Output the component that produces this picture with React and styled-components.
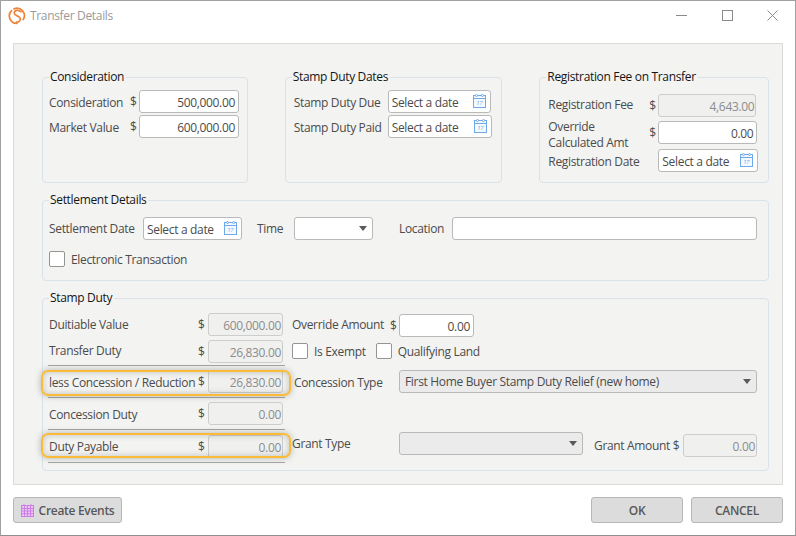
import React from "react";
import styled, { createGlobalStyle } from "styled-components";

const Global = createGlobalStyle`
  html, body { margin: 0; padding: 0; background: #fff; }
  body { font-family: "Open Sans", "Noto Sans", sans-serif; font-size: 12px; letter-spacing: -0.33px; color: #4b4b4b; }
  * { box-sizing: border-box; }
`;

const Window = styled.div`
  width: 796px; height: 536px; background: #fff;
  border: 1px solid #a0a0a0; border-bottom-color: #8f8f8f;
  display: flex; flex-direction: column; overflow: hidden;
`;
const TitleBar = styled.header`
  height: 42px; flex: none; display: flex; align-items: flex-start; padding: 6px 0 0 7px;
`;
const Title = styled.span`
  margin: 1px 0 0 4px; color: #9a9a9a; line-height: 16px;
`;
const WinControls = styled.div`
  margin-left: auto; display: flex; align-items: center; height: 16px; padding: 1px 17px 0 0; gap: 34.5px;
`;
const Panel = styled.main`
  flex: none; height: 442px; margin: 0 12px; background: #f3f3f2; border: 1px solid #dadada;
  padding: 25px 13px 13px 28px; display: flex; flex-direction: column; gap: 9px;
`;
const TopRow = styled.div`
  display: flex; gap: 37px;
`;
const Group = styled.fieldset`
  margin: 0; min-width: 0; border: 1px solid #d9e2ea; border-radius: 4px;
  width: ${p => p.$w}; height: ${p => p.$h}px;
  padding: ${p => p.$pt}px 6px 0 6px;
`;
const Legend = styled.legend`
  margin-left: 0; padding: 0 2px 0 1px; color: #151515; line-height: 16px;
`;
const Row = styled.div`
  display: flex; align-items: center; height: ${p => p.$h || 25}px; margin-top: ${p => p.$mt || 0}px;
  padding-left: ${p => p.$pl || 0}px; white-space: nowrap;
`;
const Label = styled.label`
  flex: none; width: ${p => (p.$w ? p.$w + "px" : "auto")}; margin-left: ${p => p.$ml || 0}px;
  position: relative; top: ${p => (p.$dy === undefined ? 1 : p.$dy)}px; line-height: 16px; white-space: nowrap;
`;
const Dollar = styled.span`
  flex: none; width: ${p => p.$w || 9}px;
`;
const Field = styled.div`
  flex: none; width: ${p => p.$w}px; height: 23px; margin-left: ${p => p.$ml || 0}px;
  position: relative; top: ${p => p.$dy || 0}px;
  background: ${p => (p.$off ? "#f0f0ef" : "#fff")};
  border: 1px solid ${p => (p.$off ? "#cdcdcd" : "#b9b9b9")}; border-radius: 3px;
  color: ${p => (p.$off ? "#8c8c8c" : "#4b4b4b")};
  display: flex; align-items: center; justify-content: flex-end;
  padding: 3px ${p => (p.$off ? 1 : 3)}px 0 3px; line-height: 16px;
`;
const DateBox = styled.div`
  flex: none; width: ${p => p.$w}px; height: 23px; background: #fff; border: 1px solid #b9b9b9; border-radius: 3px;
  display: flex; align-items: center; justify-content: space-between; padding: 3px 3px 0 3px;
  color: #4b4b4b; line-height: 16px;
`;
const CalWrap = styled.span`
  display: flex; position: relative; top: -2px;
`;
const Drop = styled.div`
  flex: none; width: ${p => p.$w}px; height: 23px; margin-left: ${p => p.$ml || 0}px;
  background: ${p => (p.$grey ? "#ebebeb" : "#fff")}; border: 1px solid #b9b9b9; border-radius: 3px;
  display: flex; align-items: center; padding: 0 5px 0 5px;
  &::after { content: ""; margin-left: auto; border: 4.5px solid transparent; border-top: 5px solid #5a5a5a; border-bottom: 0; }
`;
const Box = styled.span`
  flex: none; width: 16px; height: 16px; background: #fff; border: 1px solid #949494; border-radius: 2px;
  margin-right: 6px; margin-left: ${p => p.$ml || 0}px;
`;
const CheckText = styled.span`
  position: relative; top: 0;
`;
const DutyBody = styled.div`
  display: flex; gap: 7px;
`;
const LeftCol = styled.div`
  flex: none; width: 237px; margin-left: -1px;
`;
const RightCol = styled.div`
  flex: 1; min-width: 0; display: flex; flex-direction: column;
`;
const DutyRow = styled.div`
  position: relative; display: flex; align-items: center; height: ${p => p.$h}px;
  padding: 0 2px 0 1px; border-bottom: ${p => (p.$line ? "1px solid #a5a5a5" : "0")};
`;
const Highlight = styled.span`
  position: absolute; left: -7px; right: -6px; top: ${p => p.$top}px; height: ${p => p.$h}px;
  border: 2px solid #fbbb36; border-radius: 7px; pointer-events: none;
  box-shadow: 0 0 6px rgba(60,60,60,.35), inset 0 0 6px rgba(60,60,60,.28);
`;
const Footer = styled.footer`
  flex: 1; display: flex; align-items: flex-start; gap: 8px; padding: 12px 12px 0;
`;
const Btn = styled.button`
  height: 26px; width: ${p => p.$w}px; margin-right: ${p => p.$mr || 0}; background: #dcdcdc; border: 1px solid #b7b7b7; border-radius: 3px;
  font: 600 12px "Open Sans", sans-serif; letter-spacing: -0.3px; color: #585858; padding: 0;
  display: flex; align-items: center; justify-content: center; gap: 5px;
`;

const Cal = () => (
  <svg width="16" height="16" viewBox="0 0 16 16" fill="none" stroke="#6fa9ea">
    <rect x="2.500" y="2.500" width="12" height="12" fill="#f4f9ff" />
    <path d="M3 5.500h11" />
    <circle cx="5.500" cy="2.500" r="1" fill="#fff" /><circle cx="11.500" cy="2.500" r="1" fill="#fff" />
    <text x="5.200" y="12.400" fontSize="6" fontStyle="italic" fill="#6fa9ea" stroke="none">17</text>
  </svg>
);
const DateInput = ({ w }) => <DateBox $w={w}><span>Select a date</span><CalWrap><Cal /></CalWrap></DateBox>;

const Logo = () => (
  <svg width="18" height="18" viewBox="0 0 18 18" fill="none" stroke="#f0833a" strokeWidth="1.7" strokeLinecap="round">
    <path d="M3.600 3.600A7.400 7.400 0 0 0 9 16.300" />
    <path d="M6 1.900A7.400 7.400 0 0 1 15.200 12.600" />
    <path d="M13 4.800C10 2.200 5.800 3.400 6.300 6.300C6.800 9.200 12 8.600 12.300 11.800C12.500 14 10.500 15.400 8.400 15" />
  </svg>
);
const CalPurple = () => (
  <svg width="13" height="13" viewBox="0 0 13 13" stroke="#cc7ee6" fill="#ebc6f5" strokeWidth="1">
    <rect x="0.500" y="1.500" width="12" height="11" />
    <path d="M0.500 4.500h12M0.500 7h12M0.500 9.700h12M3.500 1.500v11M6.500 1.500v11M9.500 1.500v11M3 .2v2M10 .2v2" fill="none" />
  </svg>
);

const DutyLine = ({ h, line, label, value, hlTop, hlH, dy }) => (
  <DutyRow $h={h} $line={line}>
    <Label $dy={dy} $w={149}>{label}</Label><Dollar $w={10}>$</Dollar><Field $off $w={75}>{value}</Field>
    {hlH ? <Highlight $top={hlTop} $h={hlH} /> : null}
  </DutyRow>
);

export default function App() {
  return (
    <>
      <Global />
      <Window>
        <TitleBar>
          <Logo />
          <Title>Transfer Details</Title>
          <WinControls>
            <svg width="11" height="11" stroke="#8a8a8a" fill="none"><path d="M0 5.500h11" /></svg>
            <svg width="11" height="11" stroke="#8a8a8a" fill="none"><rect x=".5" y=".5" width="10" height="10" /></svg>
            <svg width="11" height="11" stroke="#8a8a8a" fill="none"><path d="M.5 .5l10 10M10.500 .5l-10 10" /></svg>
          </WinControls>
        </TitleBar>
        <Panel>
          <TopRow>
            <Group $w="206px" $h={114} $pt={4}>
              <Legend>Consideration</Legend>
              <Row><Label $w={81}>Consideration</Label><Dollar>$</Dollar><Field $w={100}>500,000.00</Field></Row>
              <Row><Label $w={81}>Market Value</Label><Dollar>$</Dollar><Field $w={100}>600,000.00</Field></Row>
            </Group>
            <Group $w="218px" $h={114} $pt={4}>
              <Legend>Stamp Duty Dates</Legend>
              <Row $pl={2}><Label $w={94}>Stamp Duty Due</Label><DateInput w={103} /></Row>
              <Row $pl={2}><Label $w={94}>Stamp Duty Paid</Label><DateInput w={104} /></Row>
            </Group>
            <Group $w="230px" $h={114} $pt={9}>
              <Legend>Registration Fee on Transfer</Legend>
              <Row $h={22} $pl={2}><Label $dy={0} $w={101}>Registration Fee</Label><Dollar>$</Dollar><Field $off $w={98}>4,643.00</Field></Row>
              <Row $h={33} $pl={2}>
                <Label $dy={2} $w={101}>Override<br />Calculated Amt</Label><Dollar>$</Dollar><Field $w={99}>0.00</Field>
              </Row>
              <Row $h={23} $pl={2}><Label $w={110}>Registration Date</Label><DateInput w={100} /></Row>
            </Group>
          </TopRow>
          <Group $w="727px" $h={89} $pt={9}>
            <Legend>Settlement Details</Legend>
            <Row $h={22}>
              <Label $w={94}>Settlement Date</Label>
              <DateInput w={99} />
              <Label $ml={15} $w={37}>Time</Label>
              <Drop $w={79} />
              <Label $ml={26} $w={53}>Location</Label>
              <Field $w={305} />
            </Row>
            <Row $h={40}><Box /><CheckText>Electronic Transaction</CheckText></Row>
          </Group>
          <Group $w="727px" $h={181} $pt={6}>
            <Legend>Stamp Duty</Legend>
            <DutyBody>
              <LeftCol>
                <DutyLine h={25} dy={0} label="Duitiable Value" value="600,000.00" />
                <DutyLine h={29} dy={0} line label="Transfer Duty" value="26,830.00" />
                <DutyLine h={32} line label="less Concession / Reduction" value="26,830.00" hlTop={4} hlH={26} />
                <DutyLine h={32} line label="Concession Duty" value="0.00" />
                <DutyLine h={33} line label="Duty Payable" value="0.00" hlTop={3} hlH={25} />
              </LeftCol>
              <RightCol>
                <Row $h={26}><Label $dy={0} $w={98}>Override Amount</Label><Dollar>$</Dollar><Field $w={75}>0.00</Field></Row>
                <Row $h={26}><Box /><CheckText>Is Exempt</CheckText><Box $ml={10} /><CheckText>Qualifying Land</CheckText></Row>
                <Row $h={35}><Label $ml={2} $w={105}>Concession Type</Label><Drop $grey $w={358}>First Home Buyer Stamp Duty Relief (new home)</Drop></Row>
                <Row $h={39} $mt={25}><Label $dy={0} $w={107}>Grant Type</Label><Drop $grey $w={184} /><Label $dy={2} $ml={11} $w={80}>Grant Amount $</Label><Field $off $dy={2} $w={74} $ml={9}>0.00</Field></Row>
              </RightCol>
            </DutyBody>
          </Group>
        </Panel>
        <Footer>
          <Btn $w={109} $mr="auto"><CalPurple />Create Events</Btn>
          <Btn $w={92}>OK</Btn>
          <Btn $w={92}>CANCEL</Btn>
        </Footer>
      </Window>
    </>
  );
}
